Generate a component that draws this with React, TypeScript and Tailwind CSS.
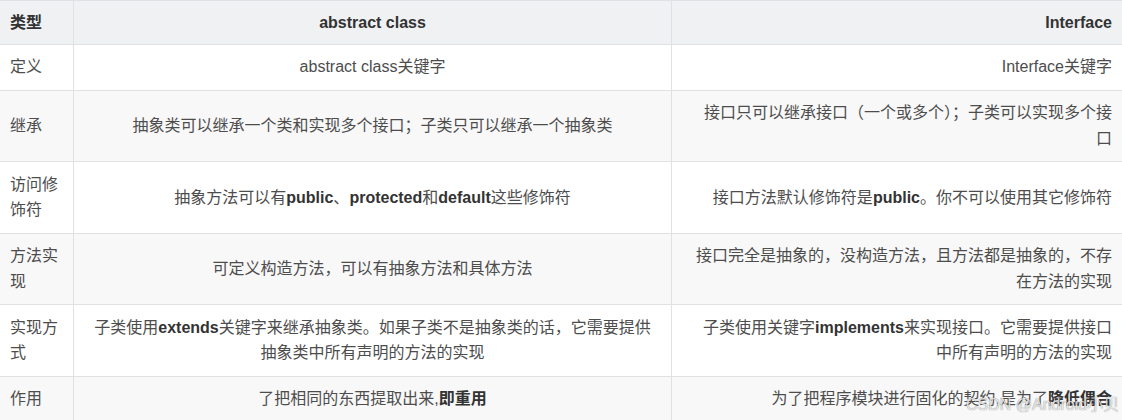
type Row = {
    label: string;
    abs: React.ReactNode;
    itf: React.ReactNode;
};

const rows: Row[] = [
    {
        label: "定义",
        abs: "abstract class关键字",
        itf: "Interface关键字",
    },
    {
        label: "继承",
        abs: "抽象类可以继承一个类和实现多个接口；子类只可以继承一个抽象类",
        itf: <>接口只可以继承接口（一个或多个）；子类可以实现多个接<br />口</>,
    },
    {
        label: "访问修饰符",
        abs: <>抽象方法可以有<b>public</b>、<b>protected</b>和<b>default</b>这些修饰符</>,
        itf: <>接口方法默认修饰符是<b>public</b>。你不可以使用其它修饰符</>,
    },
    {
        label: "方法实现",
        abs: "可定义构造方法，可以有抽象方法和具体方法",
        itf: <>接口完全是抽象的，没构造方法，且方法都是抽象的，不存<br />在方法的实现</>,
    },
    {
        label: "实现方式",
        abs: <>子类使用<b>extends</b>关键字来继承抽象类。如果子类不是抽象类的话，它需要提供<br />抽象类中所有声明的方法的实现</>,
        itf: <>子类使用关键字<b>implements</b>来实现接口。它需要提供接口<br />中所有声明的方法的实现</>,
    },
    {
        label: "作用",
        abs: <>了把相同的东西提取出来,<b>即重用</b></>,
        itf: <>为了把程序模块进行固化的契约,是为了<b>降低偶合</b></>,
    },
];

export default function App() {
    return (
        <div className="relative w-[1122px] h-[420px] overflow-hidden bg-white text-[16px] leading-[25.5px] text-[#4d4d4d] font-['Liberation_Sans','Noto_Sans_CJK_SC',sans-serif] [&_b]:text-[#333]">
            <table className="w-[1123px] -ml-px border-collapse table-fixed">
                <colgroup>
                    <col className="w-[74px]" />
                    <col className="w-[598px]" />
                    <col className="w-[451px]" />
                </colgroup>
                <thead>
                    <tr className="bg-[#eff1f3] font-bold text-[#333]">
                        <th className="border border-[#dfe2e5] px-[10px] py-[8.5px] text-left">类型</th>
                        <th className="border border-[#dfe2e5] px-[10px] py-[8.5px] text-center">abstract class</th>
                        <th className="border border-[#dfe2e5] px-[10px] py-[8.5px] text-right">Interface</th>
                    </tr>
                </thead>
                <tbody>
                    {rows.map((r, i) => (
                        <tr key={r.label} className={i % 2 === 1 ? "bg-[#f8f8f8]" : "bg-white"}>
                            {/* 第一列：左对齐 */}
                            <td className="border border-[#dfe2e5] px-[10px] py-[9.75px] text-left align-middle">{r.label}</td>
                            <td className="border border-[#dfe2e5] px-[10px] py-[9.75px] text-center align-middle">{r.abs}</td>
                            <td className="border border-[#dfe2e5] px-[10px] py-[9.75px] text-right align-middle">{r.itf}</td>
                        </tr>
                    ))}
                </tbody>
            </table>

            {/* 水印 */}
            <div className="absolute left-[966px] top-[394px] text-[16px] leading-[22px] text-white/80 [text-shadow:0_0_1px_rgba(0,0,0,0.6)] whitespace-nowrap">
                CSDN @Android小贝
            </div>
        </div>
    );
}
